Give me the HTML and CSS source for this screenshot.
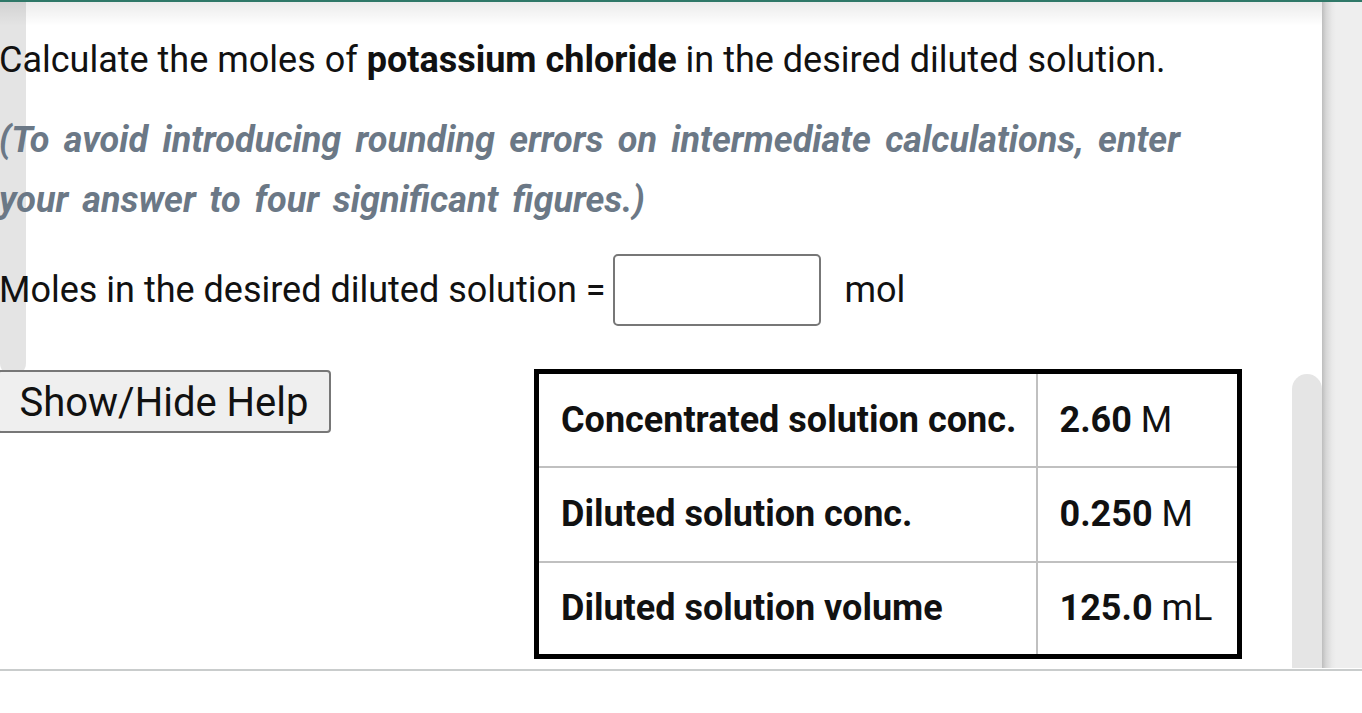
FILE: index.html
```html
<!DOCTYPE html>
<html>
<head>
<meta charset="utf-8">
<link rel="stylesheet" href="styles.css">
</head>
<body>
<div class="page">
  <div class="content">
    <p class="lead">Calculate the moles of <b>potassium chloride</b> in the desired diluted solution.</p>
    <p class="hint">(To avoid introducing rounding errors on intermediate calculations, enter your answer to four significant figures.)</p>
    <div class="answer">
      <span>Moles in the desired diluted solution =</span>
      <input class="box" type="text">
      <span class="unit">mol</span>
    </div>
    <div class="lower">
      <button class="help">Show/Hide Help</button>
      <table class="data">
        <colgroup><col class="c1"><col class="c2"></colgroup>
        <tr><th>Concentrated solution conc.</th><td><b>2.60</b> M</td></tr>
        <tr><th>Diluted solution conc.</th><td><b>0.250</b> M</td></tr>
        <tr><th>Diluted solution volume</th><td><b>125.0</b> mL</td></tr>
      </table>
    </div>
  </div>
  <div class="rule"></div>
</div>
<div class="topline"></div>
<div class="topshade"></div>
<div class="leftbar"></div>
<div class="thumb"></div>
<div class="sideband"></div>
</body>
</html>
```
FILE: styles.css
```css
html, body {
  margin: 0;
  padding: 0;
  background: #fff;
  overflow: hidden;
  width: 1362px;
  height: 713px;
}
body {
  font-family: Roboto, "Liberation Sans", sans-serif;
  color: #111;
  position: relative;
}
.page {
  padding-top: 30px;
}
.content {
  width: 1181px;
  margin-left: -1px;
  font-size: 36px;
}
.lead {
  margin: 0;
  line-height: 60px;
  position: relative;
  z-index: 2;
}
.lead b { font-weight: 700; }
.hint {
  margin: 20px 0 0 0;
  line-height: 60px;
  font-style: italic;
  font-weight: 700;
  color: #6b7886;
  text-align: justify;
  word-spacing: 5px;
  position: relative;
  z-index: 2;
}
.answer {
  margin-top: 24px;
  display: flex;
  align-items: center;
  height: 72px;
  position: relative;
  z-index: 2;
}
.box {
  box-sizing: border-box;
  width: 208px;
  height: 72px;
  margin-left: 7px;
  border: 2px solid #777;
  border-radius: 5px;
  background: #fff;
  padding: 0;
}
.unit { margin-left: 24px; }
.lower {
  margin-top: 43px;
  display: flex;
  align-items: flex-start;
}
.help {
  flex: none;
  box-sizing: border-box;
  margin-left: -2px;
  margin-top: 1px;
  width: 334px;
  height: 63px;
  padding: 2px 0 0 0;
  font-family: Roboto, "Liberation Sans", sans-serif;
  font-size: 40px;
  white-space: nowrap;
  color: #111;
  background: #efefef;
  border: 2px solid #777;
  border-radius: 4px;
  position: relative;
  z-index: 2;
}
.data {
  flex: none;
  margin-left: 203px;
  border-collapse: collapse;
  table-layout: fixed;
  width: 703px;
  border: 5px solid #000;
  font-size: 36px;
}
.c1 { width: 500px; }
.c2 { width: 203px; }
.data tr { height: 95px; }
.data th, .data td {
  border: 2px solid #c0c0c0;
  padding: 0 0 0 22px;
  text-align: left;
  white-space: nowrap;
}
.data th {
  font-weight: 700;
}
.data td {
  font-weight: 400;
}
.data tr:first-child th, .data tr:first-child td { border-top: none; }
.data tr:last-child th, .data tr:last-child td { border-bottom: none; }
.data th { border-left: none; }
.data td { border-right: none; }
.rule {
  margin-top: 10px;
  height: 2px;
  background: #c9cccc;
  width: 1362px;
  position: relative;
  z-index: 6;
}
.topline {
  position: absolute;
  left: 0; top: 0;
  width: 1362px;
  height: 2px;
  background: #2f7868;
  z-index: 5;
}
.topshade {
  position: absolute;
  left: 0; top: 2px;
  width: 1322px;
  height: 24px;
  background: linear-gradient(to bottom, rgba(0,0,0,0.08), rgba(0,0,0,0));
  z-index: 4;
}
.leftbar {
  position: absolute;
  left: 0; top: 0;
  width: 26px;
  height: 376px;
  background: #e4e4e4;
  border-radius: 0 0 13px 13px;
  z-index: 1;
}
.thumb {
  position: absolute;
  left: 1292px; top: 374px;
  width: 30px;
  height: 294px;
  background: #e5e5e5;
  border-radius: 15px 15px 0 0;
  z-index: 1;
}
.sideband {
  position: absolute;
  left: 1322px; top: 0;
  width: 40px;
  height: 668px;
  background: linear-gradient(to right, #bdbdbd 0px, #d6d6d6 4px, #e9e9e9 10px, #eeeeee 14px);
  z-index: 3;
}
```
